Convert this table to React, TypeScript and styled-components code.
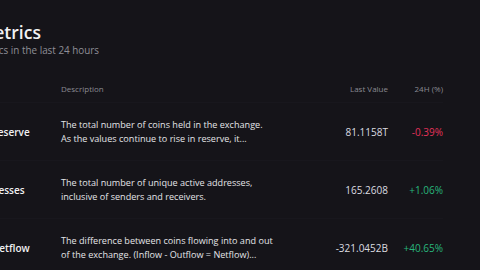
import React from "react";
import styled, { createGlobalStyle } from "styled-components";

const Global = createGlobalStyle`
  html, body {
    margin: 0;
    padding: 0;
    background: #151419;
    overflow: hidden;
  }
  body {
    font-family: "Open Sans", "Noto Sans", sans-serif;
    color: #e6e6ea;
  }
`;

const Page = styled.div`
  width: 537px;
  margin-left: -57px;
  height: 270px;
  overflow: hidden;
`;

const Header = styled.header`
  padding-top: 20px;
  display: flex;
  flex-direction: column;
`;

const Title = styled.h1`
  margin: 0;
  font-size: 17.5px;
  line-height: 24px;
  font-weight: 600;
  color: #f2f2f4;
`;

const Subtitle = styled.p`
  margin: 0;
  padding-left: 12px;
  font-size: 9.9px;
  line-height: 13px;
  color: #8e8e96;
`;

const Table = styled.div`
  margin-top: 18px;
  display: grid;
  grid-template-columns: 118px 213px 114px 55px;
`;

const Row = styled.div<{ $head?: boolean }>`
  display: contents;
  & > * {
    height: ${(p) => (p.$head ? "28px" : "58px")};
    border-bottom: 1px solid #18171d;
    box-sizing: border-box;
  }
`;

const HeadCell = styled.div<{ $right?: boolean }>`
  display: flex;
  align-items: center;
  justify-content: ${(p) => (p.$right ? "flex-end" : "flex-start")};
  font-size: 8px;
  color: #8a8a92;
`;

const NameCell = styled.div`
  display: flex;
  align-items: center;
  font-size: 10px;
  font-weight: 600;
  color: #f0f0f2;
  white-space: nowrap;
`;

const DescCell = styled.div`
  display: flex;
  align-items: center;
  font-size: 9.1px;
  line-height: 14px;
  color: #e4e4e8;
`;

const ValueCell = styled.div<{ $tone?: "up" | "down" }>`
  display: flex;
  align-items: center;
  justify-content: flex-end;
  font-size: 10px;
  color: ${(p) =>
    p.$tone === "up" ? "#28b67c" : p.$tone === "down" ? "#e3325a" : "#dcdce0"};
`;

const rows = [
  {
    name: "Exchange Reserve",
    desc: "The total number of coins held in the exchange. As the values continue to rise in reserve, it...",
    value: "81.1158T",
    change: "-0.39%",
  },
  {
    name: "Active Addresses",
    desc: "The total number of unique active addresses, inclusive of senders and receivers.",
    value: "165.2608",
    change: "+1.06%",
  },
  {
    name: "Exchange Netflow",
    desc: "The difference between coins flowing into and out of the exchange. (Inflow - Outflow = Netflow)...",
    value: "-321.0452B",
    change: "+40.65%",
  },
];

export default function App() {
  return (
    <>
      <Global />
      <Page>
        <Header>
          <Title>Key Metrics</Title>
          <Subtitle>Key metrics in the last 24 hours</Subtitle>
        </Header>
        <Table>
          <Row $head>
            <HeadCell />
            <HeadCell>Description</HeadCell>
            <HeadCell $right>Last Value</HeadCell>
            <HeadCell $right>24H (%)</HeadCell>
          </Row>
          {rows.map((r) => (
            <Row key={r.name}>
              <NameCell>{r.name}</NameCell>
              <DescCell>{r.desc}</DescCell>
              <ValueCell>{r.value}</ValueCell>
              <ValueCell $tone={r.change.startsWith("-") ? "down" : "up"}>
                {r.change}
              </ValueCell>
            </Row>
          ))}
        </Table>
      </Page>
    </>
  );
}
